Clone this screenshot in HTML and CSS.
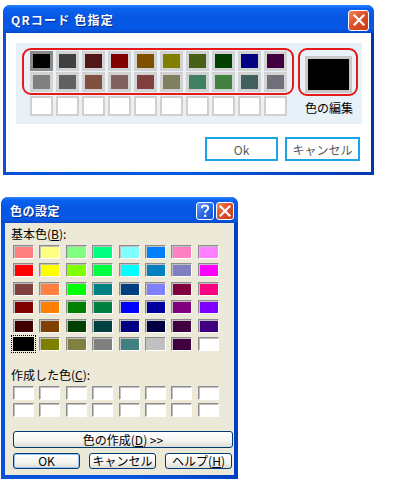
FILE: index.html
```html
<!DOCTYPE html>
<html lang="ja">
<head>
<meta charset="utf-8">
<link rel="stylesheet" href="styles.css">
</head>
<body>
<div class="win win1">
  <div class="titlebar tb1">
    <span class="title t1">QRコード 色指定</span>
    <span class="xbtn x1"><svg width="12" height="12" viewBox="0 0 12 12"><path d="M1.5 1.5L10.5 10.5M10.5 1.5L1.5 10.5" stroke="#fff" stroke-width="2.2" stroke-linecap="square"/></svg></span>
  </div>
  <div class="body1">
    <div class="panel">
      <div class="leftcol">
        <div class="redbox rb1">
          <div class="row">
            <span class="sw sel" style="--c:#000000"></span>
            <span class="sw" style="--c:#404040"></span>
            <span class="sw" style="--c:#501818"></span>
            <span class="sw" style="--c:#800000"></span>
            <span class="sw" style="--c:#805000"></span>
            <span class="sw" style="--c:#808000"></span>
            <span class="sw" style="--c:#466018"></span>
            <span class="sw" style="--c:#004000"></span>
            <span class="sw" style="--c:#000080"></span>
            <span class="sw" style="--c:#400040"></span>
          </div>
          <div class="row">
            <span class="sw" style="--c:#808080"></span>
            <span class="sw" style="--c:#606060"></span>
            <span class="sw" style="--c:#805040"></span>
            <span class="sw" style="--c:#806060"></span>
            <span class="sw" style="--c:#804040"></span>
            <span class="sw" style="--c:#808060"></span>
            <span class="sw" style="--c:#408060"></span>
            <span class="sw" style="--c:#408040"></span>
            <span class="sw" style="--c:#406060"></span>
            <span class="sw" style="--c:#707078"></span>
          </div>
        </div>
        <div class="row row3">
          <span class="sw empty"></span><span class="sw empty"></span><span class="sw empty"></span><span class="sw empty"></span><span class="sw empty"></span>
          <span class="sw empty"></span><span class="sw empty"></span><span class="sw empty"></span><span class="sw empty"></span><span class="sw empty"></span>
        </div>
      </div>
      <div class="rightcol">
        <div class="redbox rb2"><div class="preview"></div></div>
        <div class="editlabel">色の編集</div>
      </div>
    </div>
    <div class="btns1">
      <button class="b1 ok">Ok</button>
      <button class="b1 cancel">キャンセル</button>
    </div>
  </div>
</div>

<div class="win win2">
  <div class="titlebar tb2">
    <span class="title t2">色の設定</span>
    <span class="hbtn"><svg width="12" height="14" viewBox="0 0 12 14"><path d="M2.8 4.3C2.8 2.4 4.2 1.4 6 1.4C7.9 1.4 9.2 2.5 9.2 4.1C9.2 5.5 8.3 6.1 7.3 6.8C6.5 7.4 6.1 7.9 6.1 9" fill="none" stroke="#fff" stroke-width="2"/><rect x="5" y="10.6" width="2.3" height="2.3" fill="#fff"/></svg></span>
    <span class="xbtn x2"><svg width="12" height="12" viewBox="0 0 12 12"><path d="M1.5 1.5L10.5 10.5M10.5 1.5L1.5 10.5" stroke="#fff" stroke-width="2.2" stroke-linecap="square"/></svg></span>
  </div>
  <div class="body2">
    <div class="lbl lbl1">基本色(<u>B</u>):</div>
    <div class="grid basic">
      <span class="cs" style="--c:#FF8080"></span><span class="cs" style="--c:#FFFF80"></span><span class="cs" style="--c:#80FF80"></span><span class="cs" style="--c:#00FF80"></span><span class="cs" style="--c:#80FFFF"></span><span class="cs" style="--c:#0080FF"></span><span class="cs" style="--c:#FF80C0"></span><span class="cs" style="--c:#FF80FF"></span>
      <span class="cs" style="--c:#FF0000"></span><span class="cs" style="--c:#FFFF00"></span><span class="cs" style="--c:#80FF00"></span><span class="cs" style="--c:#00FF40"></span><span class="cs" style="--c:#00FFFF"></span><span class="cs" style="--c:#0080C0"></span><span class="cs" style="--c:#8080C0"></span><span class="cs" style="--c:#FF00FF"></span>
      <span class="cs" style="--c:#804040"></span><span class="cs" style="--c:#FF8040"></span><span class="cs" style="--c:#00FF00"></span><span class="cs" style="--c:#008080"></span><span class="cs" style="--c:#004080"></span><span class="cs" style="--c:#8080FF"></span><span class="cs" style="--c:#800040"></span><span class="cs" style="--c:#FF0080"></span>
      <span class="cs" style="--c:#800000"></span><span class="cs" style="--c:#FF8000"></span><span class="cs" style="--c:#008000"></span><span class="cs" style="--c:#008040"></span><span class="cs" style="--c:#0000FF"></span><span class="cs" style="--c:#0000A0"></span><span class="cs" style="--c:#800080"></span><span class="cs" style="--c:#8000FF"></span>
      <span class="cs" style="--c:#400000"></span><span class="cs" style="--c:#804000"></span><span class="cs" style="--c:#004000"></span><span class="cs" style="--c:#004040"></span><span class="cs" style="--c:#000080"></span><span class="cs" style="--c:#000040"></span><span class="cs" style="--c:#400040"></span><span class="cs" style="--c:#400080"></span>
      <span class="cs csel" style="--c:#000000"></span><span class="cs" style="--c:#808000"></span><span class="cs" style="--c:#808040"></span><span class="cs" style="--c:#808080"></span><span class="cs" style="--c:#408080"></span><span class="cs" style="--c:#C0C0C0"></span><span class="cs" style="--c:#400040"></span><span class="cs" style="--c:#FFFFFF"></span>
    </div>
    <div class="lbl lbl2">作成した色(<u>C</u>):</div>
    <div class="grid custom">
      <span class="cs"></span><span class="cs"></span><span class="cs"></span><span class="cs"></span><span class="cs"></span><span class="cs"></span><span class="cs"></span><span class="cs"></span>
      <span class="cs"></span><span class="cs"></span><span class="cs"></span><span class="cs"></span><span class="cs"></span><span class="cs"></span><span class="cs"></span><span class="cs"></span>
    </div>
    <button class="b2 define">色の作成(<u>D</u>) &gt;&gt;</button>
    <div class="btns2">
      <button class="b2 okb">OK</button>
      <button class="b2">キャンセル</button>
      <button class="b2">ヘルプ(<u>H</u>)</button>
    </div>
  </div>
</div>
</body>
</html>
```

FILE: styles.css
```css
* { box-sizing: border-box; }
html, body { margin: 0; padding: 0; background: #fff; }
body {
  font-family: "Noto Sans CJK JP", "DejaVu Sans", sans-serif;
  font-size: 12px;
  color: #000;
}
.win {
  background: #0a56dc;
  display: flex;
  flex-direction: column;
  border-radius: 7px 7px 0 0;
}
.win1 {
  margin: 5px 0 0 3px;
  width: 371px;
  height: 170px;
  padding: 0 3px 3px 3px;
  background: linear-gradient(to right, #0a50d8 0, #0a58e0 50%, #0038b0 100%);
}
.titlebar {
  display: flex;
  align-items: center;
  border-radius: 7px 7px 0 0;
  background: linear-gradient(to bottom, #2d86ff 0%, #0a62f0 12%, #0656e2 45%, #0658e6 85%, #0648c8 100%);
  margin: 0 -3px;
  padding: 0 5px 0 8px;
  flex: none;
}
.tb1 { height: 28px; }
.title {
  color: #fff;
  font-weight: bold;
  flex: 1;
  text-shadow: 1px 1px 0 #0a2c90;
}
.t1 { font-size: 12px; letter-spacing: 1.2px; padding-top: 1px; }
.xbtn, .hbtn {
  display: flex;
  align-items: center;
  justify-content: center;
  border: 1px solid #fff;
  border-radius: 3px;
  flex: none;
}
.xbtn { background: linear-gradient(135deg, #f08a60 0%, #e0502a 45%, #c83a18 100%); }
.hbtn { background: linear-gradient(135deg, #6a9cff 0%, #2a6ae8 50%, #1a50d0 100%); }
.x1 { width: 21px; height: 21px; margin-top: 2px; }
.body1 {
  background: #fff;
  flex: 1;
  display: flex;
  flex-direction: column;
}
.panel {
  margin: 10px 9px 0 10px;
  height: 81px;
  background: #e8f0f8;
  display: flex;
  padding: 5px 0 0 6px;
  gap: 4px;
}
.leftcol { width: 272px; }
.redbox {
  border: 2px solid #e81818;
  border-radius: 9px;
}
.rb1 {
  height: 47px;
  padding: 1px 0 0 6px;
  display: flex;
  flex-direction: column;
  gap: 1px;
}
.row { display: flex; gap: 3px; }
.row3 { margin: 1px 0 0 8px; }
.sw {
  width: 23px;
  height: 20px;
  border: 3px solid #d2d2d2;
  background: var(--c);
  flex: none;
}
.sw.sel { border-color: #8a8a8a; }
.sw.empty { background: #fff; border-color: #d0d0d0; border-width: 2px; }
.rightcol { width: 60px; display: flex; flex-direction: column; align-items: center; }
.rb2 {
  width: 60px;
  height: 48px;
  padding: 6px 0 0 5px;
  align-self: stretch;
}
.preview {
  width: 47px;
  height: 37px;
  border: 3px solid #c8c8c8;
  background: #000;
}
.editlabel { margin-top: 4px; font-size: 12px; line-height: 16px; padding-left: 2px; }
.btns1 {
  display: flex;
  justify-content: flex-end;
  gap: 7px;
  margin: 13px 11px 0 0;
}
.b1 {
  height: 24px;
  border: 2px solid #1aa6e6;
  background: #fff;
  color: #5a5a5a;
  font-family: inherit;
  font-size: 12px;
  padding: 0;
}
.ok { width: 73px; }
.cancel { width: 75px; }

.win2 {
  margin: 22px 0 0 1px;
  width: 237px;
  height: 282px;
  padding: 0 4px 4px 4px;
  background: linear-gradient(to right, #0a50d8 0, #0a58e0 50%, #0040c0 100%);
}
.tb2 { height: 26px; margin: 0 -4px; padding: 0 4px 0 9px; gap: 2px; }
.t2 { font-size: 12px; letter-spacing: 0.5px; }
.hbtn, .x2 { width: 18px; height: 18px; margin-top: 2px; }
.body2 {
  background: #ece9d8;
  flex: 1;
  padding: 3px 0 0 6px;
  display: flex;
  flex-direction: column;
}
.lbl { line-height: 16px; font-size: 12px; }
.grid {
  display: grid;
  grid-template-columns: repeat(8, 21px);
  column-gap: 5.4px;
  margin-left: 2px;
}
.basic { margin-top: 3px; row-gap: 4.4px; }
.cs {
  height: 14px;
  border: 1px solid;
  border-color: #8c8c8c #fff #fff #8c8c8c;
  box-shadow: inset 1px 1px 0 #c0c0c0;
  background: var(--c, #fff);
}
.csel {
  border: 2px solid #000;
  box-shadow: none;
  outline: 1px dotted #000;
  outline-offset: 1px;
}
.lbl2 { margin-top: 16px; }
.custom { margin-top: 3px; row-gap: 3.5px; }
.b2 {
  font-family: inherit;
  font-size: 12px;
  height: 16px;
  padding: 0;
  line-height: 14px;
  border: 1px solid #003c74;
  border-radius: 3px;
  background: linear-gradient(to bottom, #ffffff 0%, #f4f4f0 60%, #dcdcd4 100%);
  color: #000;
}
.define { margin: 14px 0 0 2px; width: 220px; height: 17px; }
.btns2 { display: flex; gap: 9px; margin: 5px 0 0 2px; }
.btns2 .b2 { width: 67px; height: 16px; }
.okb { box-shadow: inset 0 0 0 1px #9cc0f0; }
```
